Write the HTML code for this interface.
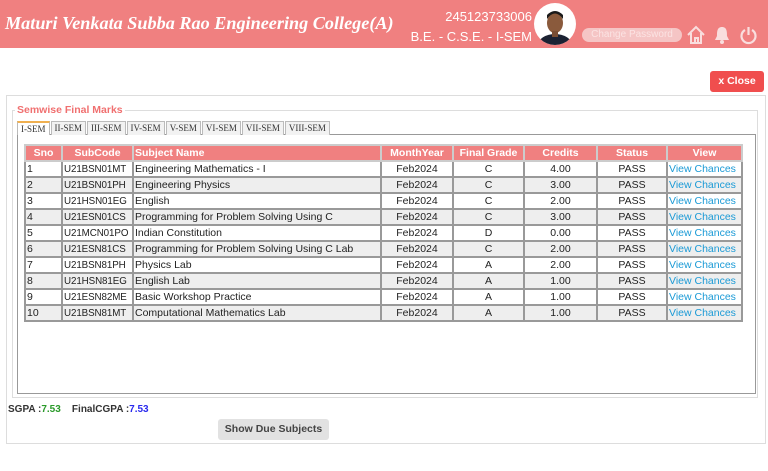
<!DOCTYPE html>
<html><head><meta charset="utf-8"><style>
*{box-sizing:border-box;margin:0;padding:0}
body{width:768px;height:471px;background:#fff;font-family:"Liberation Sans",sans-serif;position:relative;overflow:hidden}
.hdr{position:absolute;left:0;top:0;width:768px;height:48px;background:#f08080}
.title{position:absolute;left:5px;top:13px;font-family:"Liberation Serif",serif;font-style:italic;font-weight:bold;font-size:18.2px;color:#fff;white-space:nowrap}
.id{position:absolute;right:236px;top:7px;color:#fff;font-size:13px;text-align:right;line-height:20px}
.av{position:absolute;left:534px;top:3px;width:42px;height:42px;border-radius:50%;background:#fff;overflow:hidden}
.cp{position:absolute;left:582px;top:28px;width:100px;height:14px;border-radius:7px;background:#f5c5c5;color:#fbe3e3;font-size:10px;text-align:center;line-height:14px}
.box{position:absolute;left:6px;top:95px;width:760px;height:349px;border:1px solid #ddd}
.close{position:absolute;left:710px;top:71px;width:54px;height:21px;background:#f04e4e;border-radius:3px;color:#fff;font-size:10.5px;font-weight:bold;text-align:center;line-height:21px}
.fs{position:absolute;left:12px;top:110px;width:746px;height:288px;border:1px solid #ddd}
.lg{position:absolute;left:15px;top:104px;background:#fff;color:#f07070;font-weight:bold;font-size:10.5px;padding:0 2px}
.tabs{position:absolute;left:17px;top:121px;display:flex}
.tab{height:14px;border:1px solid #bbb;border-bottom:none;background:#f2f2f2;font-family:"Liberation Serif",serif;font-size:9px;color:#333;padding:0 3px;line-height:13px;margin-right:1px}
.tab.a{background:#fff;border-top:2px solid #f0b050;height:14px}
.panel{position:absolute;left:17px;top:134px;width:739px;height:260px;border:1px solid #999}
table{position:absolute;left:24px;top:144px;width:717px;table-layout:fixed;border-collapse:collapse;font-size:10.5px;color:#222}
td,th{border:2px solid #999;height:16px;padding:0 1px;white-space:nowrap;overflow:hidden;line-height:12px;vertical-align:middle}
td:nth-child(2){font-size:9.8px;padding:1px 0 0 1px;letter-spacing:-0.1px}
th{background:#f08080;color:#fff;font-size:10.5px;border-color:#ccc}
tr:nth-child(odd) td{background:#eee}
.c{text-align:center}
.v{color:#1a9ad6}
.sg{position:absolute;left:8px;top:404px;font-size:10px;font-weight:bold;color:#333}
.btn{position:absolute;left:218px;top:419px;width:111px;height:21px;background:#e2e2e2;border-radius:3px;font-size:10.5px;font-weight:bold;color:#444;text-align:center;line-height:21px}
</style></head><body>
<div class="hdr">
<div class="title">Maturi Venkata Subba Rao Engineering College(A)</div>
<div class="id">245123733006<br>B.E. - C.S.E. - I-SEM</div>
<div class="av"><svg width="42" height="42"><ellipse cx="21" cy="42" rx="17" ry="11" fill="#1c2233"/><ellipse cx="21" cy="20" rx="8" ry="10" fill="#8a5a3c"/><path d="M13 16 Q21 5 29 16 L29 12 Q21 4 13 12Z" fill="#1a1a1a"/><rect x="18" y="28" width="6" height="6" fill="#7a4e34"/></svg></div>
<div class="cp">Change Password</div>
<svg style="position:absolute;left:686px;top:25px" width="20" height="20" viewBox="0 0 20 20"><path d="M2 10 L10 2 L18 10 M5 8 V18 H15 V8 M9 18 V13 H12 V18" fill="none" stroke="#f9dede" stroke-width="2"/></svg>
<svg style="position:absolute;left:713px;top:25px" width="18" height="20" viewBox="0 0 18 20"><path d="M9 2 C4 2 4 7 4 11 L2 15 H16 L14 11 C14 7 14 2 9 2Z" fill="#f9dede"/><circle cx="9" cy="17" r="2" fill="#f9dede"/></svg>
<svg style="position:absolute;left:739px;top:25px" width="19" height="20" viewBox="0 0 19 20"><path d="M6 5 A7 7 0 1 0 13 5" fill="none" stroke="#f9dede" stroke-width="2.2"/><path d="M9.5 2 V10" stroke="#f9dede" stroke-width="2.2"/></svg>
</div>
<div class="close">x Close</div>
<div class="box"></div>
<div class="fs"></div>
<div class="lg">Semwise Final Marks</div>
<div class="panel"></div>
<div class="tabs"><div class="tab a">I-SEM</div><div class="tab">II-SEM</div><div class="tab">III-SEM</div><div class="tab">IV-SEM</div><div class="tab">V-SEM</div><div class="tab">VI-SEM</div><div class="tab">VII-SEM</div><div class="tab">VIII-SEM</div></div>
<table>
<colgroup><col style="width:37px"><col style="width:71px"><col style="width:248px"><col style="width:72px"><col style="width:71px"><col style="width:73px"><col style="width:70px"><col style="width:75px"></colgroup>
<tr><th>Sno</th><th>SubCode</th><th style="text-align:left">Subject Name</th><th>MonthYear</th><th>Final Grade</th><th>Credits</th><th>Status</th><th>View</th></tr>
<tr><td>1</td><td>U21BSN01MT</td><td>Engineering Mathematics - I</td><td class="c">Feb2024</td><td class="c">C</td><td class="c">4.00</td><td class="c">PASS</td><td class="v">View Chances</td></tr>
<tr><td>2</td><td>U21BSN01PH</td><td>Engineering Physics</td><td class="c">Feb2024</td><td class="c">C</td><td class="c">3.00</td><td class="c">PASS</td><td class="v">View Chances</td></tr>
<tr><td>3</td><td>U21HSN01EG</td><td>English</td><td class="c">Feb2024</td><td class="c">C</td><td class="c">2.00</td><td class="c">PASS</td><td class="v">View Chances</td></tr>
<tr><td>4</td><td>U21ESN01CS</td><td>Programming for Problem Solving Using C</td><td class="c">Feb2024</td><td class="c">C</td><td class="c">3.00</td><td class="c">PASS</td><td class="v">View Chances</td></tr>
<tr><td>5</td><td>U21MCN01PO</td><td>Indian Constitution</td><td class="c">Feb2024</td><td class="c">D</td><td class="c">0.00</td><td class="c">PASS</td><td class="v">View Chances</td></tr>
<tr><td>6</td><td>U21ESN81CS</td><td>Programming for Problem Solving Using C Lab</td><td class="c">Feb2024</td><td class="c">C</td><td class="c">2.00</td><td class="c">PASS</td><td class="v">View Chances</td></tr>
<tr><td>7</td><td>U21BSN81PH</td><td>Physics Lab</td><td class="c">Feb2024</td><td class="c">A</td><td class="c">2.00</td><td class="c">PASS</td><td class="v">View Chances</td></tr>
<tr><td>8</td><td>U21HSN81EG</td><td>English Lab</td><td class="c">Feb2024</td><td class="c">A</td><td class="c">1.00</td><td class="c">PASS</td><td class="v">View Chances</td></tr>
<tr><td>9</td><td>U21ESN82ME</td><td>Basic Workshop Practice</td><td class="c">Feb2024</td><td class="c">A</td><td class="c">1.00</td><td class="c">PASS</td><td class="v">View Chances</td></tr>
<tr><td>10</td><td>U21BSN81MT</td><td>Computational Mathematics Lab</td><td class="c">Feb2024</td><td class="c">A</td><td class="c">1.00</td><td class="c">PASS</td><td class="v">View Chances</td></tr>
</table>
<div class="sg">SGPA :<span style="color:#2a9a2a">7.53</span> &nbsp;&nbsp; FinalCGPA :<span style="color:#2a2aee">7.53</span></div>
<div class="btn">Show Due Subjects</div>
</body></html>
